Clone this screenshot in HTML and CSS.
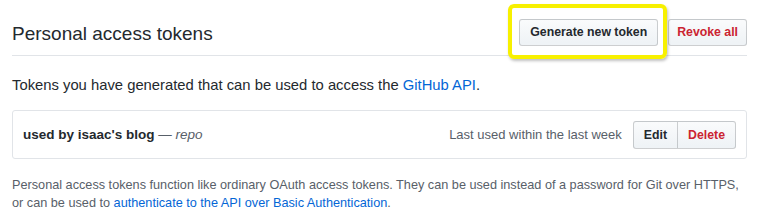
FILE: index.html
```html
<!DOCTYPE html>
<html lang="en">
<head>
    <meta charset="UTF-8">
    <title>Personal access tokens</title>
    <link rel="stylesheet" href="styles.css">
</head>
<body>
    <div class="container">
        <div class="subhead">
            <h2 class="subhead-heading">Personal access tokens</h2>
            <div class="subhead-actions">
                <span class="highlight">
                    <a href="#" class="btn">Generate new token</a>
                </span>
                <a href="#" class="btn btn-danger btn-revoke">Revoke all</a>
            </div>
        </div>

        <p class="intro">Tokens you have generated that can be used to access the <a href="#">GitHub API</a>.</p>

        <div class="token-box">
            <div class="token-name">
                <strong>used by isaac's blog</strong>
                <span class="token-scope">&mdash; <em>repo</em></span>
            </div>
            <div class="token-meta">
                <span class="last-used">Last used within the last week</span>
                <div class="btn-group">
                    <a href="#" class="btn btn-sm">Edit</a>
                    <a href="#" class="btn btn-sm btn-danger">Delete</a>
                </div>
            </div>
        </div>

        <p class="note">Personal access tokens function like ordinary OAuth access tokens. They can be used instead of a password for Git over HTTPS, or can be used to <a href="#">authenticate to the API over Basic Authentication</a>.</p>
    </div>
</body>
</html>
```

FILE: styles.css
```css
* {
    margin: 0;
    padding: 0;
    box-sizing: border-box;
}

body {
    font-family: "Liberation Sans", Arial, sans-serif;
    font-size: 14px;
    color: #24292e;
    background: #fff;
}

a {
    color: #0366d6;
    text-decoration: none;
}

.container {
    width: 735px;
    margin-left: 12px;
}

.subhead {
    display: flex;
    justify-content: space-between;
    align-items: center;
    padding-top: 19px;
    padding-bottom: 9px;
    border-bottom: 1px solid #e1e4e8;
}

.subhead-heading {
    font-size: 19px;
    font-weight: normal;
    color: #24292e;
    padding-top: 3px;
}

.subhead-actions {
    display: flex;
    align-items: center;
    gap: 10px;
}

.highlight {
    position: relative;
    display: block;
}

.highlight::after {
    content: "";
    position: absolute;
    top: -15px;
    bottom: -13px;
    left: -11px;
    right: -9px;
    border: 4px solid #f7f000;
    border-radius: 6px;
    box-shadow: 1px 2px 3px rgba(0, 0, 0, 0.25);
    pointer-events: none;
}

.btn {
    display: inline-block;
    height: 27px;
    line-height: 25px;
    padding: 0 10px;
    font-size: 12.3px;
    font-weight: bold;
    color: #24292e;
    background-image: linear-gradient(-180deg, #fafbfc 0%, #eff3f6 90%);
    border: 1px solid rgba(27, 31, 35, 0.2);
    border-radius: 3px;
    white-space: nowrap;
}

.btn-danger {
    color: #cb2431;
}

.btn-revoke {
    padding: 0 8px;
}

.intro {
    margin-top: 19px;
    font-size: 14.8px;
    line-height: 20px;
}

.token-box {
    display: flex;
    justify-content: space-between;
    align-items: center;
    height: 49px;
    margin-top: 15px;
    padding: 0 10px;
    border: 1px solid #e1e4e8;
    border-radius: 3px;
}

.token-name {
    font-size: 13.5px;
}

.token-scope {
    color: #586069;
}

.token-meta {
    display: flex;
    align-items: center;
}

.last-used {
    font-size: 13px;
    color: #586069;
    margin-right: 11px;
}

.btn-group {
    display: flex;
}

.btn-sm {
    height: 28px;
    line-height: 26px;
}

.btn-group .btn:first-child {
    border-radius: 3px 0 0 3px;
}

.btn-group .btn + .btn {
    border-left: 0;
    border-radius: 0 3px 3px 0;
}

.note {
    margin-top: 17px;
    font-size: 12.7px;
    line-height: 18px;
    color: #586069;
}
```
